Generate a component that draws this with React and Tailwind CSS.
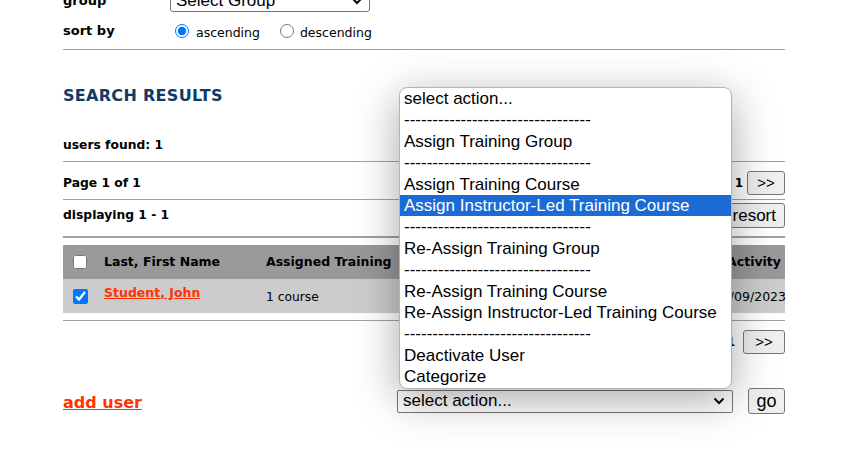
import React from "react";

const dash = "---------------------------------";

const options = [
  "select action...",
  dash,
  "Assign Training Group",
  dash,
  "Assign Training Course",
  "Assign Instructor-Led Training Course",
  dash,
  "Re-Assign Training Group",
  dash,
  "Re-Assign Training Course",
  "Re-Assign Instructor-Led Training Course",
  dash,
  "Deactivate User",
  "Categorize",
];

function Chevron() {
  return (
    <svg width="12" height="8" viewBox="0 0 12 8" className="shrink-0">
      <path d="M1.5 1.5 L6 6 L10.5 1.5" fill="none" stroke="#000" strokeWidth="2" />
    </svg>
  );
}

function Btn({ children, className = "" }) {
  return (
    <div
      className={`flex items-center justify-center border border-[#767676] bg-[#efefef] rounded-[3px] font-['Liberation_Sans',sans-serif] text-black ${className}`}
    >
      {children}
    </div>
  );
}

function Rule() {
  return <div className="h-px bg-[#a0a0a0]" />;
}

export default function App() {
  return (
    <div className="w-[843px] h-[452px] overflow-hidden bg-white font-['DejaVu_Sans',Verdana,sans-serif] text-black">
      <div className="ml-[63px] w-[722px] -mt-[11px]">
        {/* group */}
        <div className="flex items-center h-[23px]">
          <div className="w-[107px] text-[13px] font-bold">group</div>
          <div className="w-[200px] h-[23px] border border-[#767676] rounded-[3px] flex items-center justify-between pl-[5px] pr-[6px] font-['Liberation_Sans',sans-serif] text-[17px]">
            <span>Select Group</span>
            <Chevron />
          </div>
        </div>

        {/* sort by */}
        <div className="flex items-center h-[22px] mt-[8px]">
          <div className="w-[107px] text-[13px] font-bold -mt-[1px]">sort by</div>
          <label className="flex items-center ml-[5px]">
            <input type="radio" name="sort" defaultChecked className="w-[14px] h-[14px] m-0 accent-[#0075ff]" />
            <span className="ml-[7px] text-[12.5px] mt-[4px]">ascending</span>
          </label>
          <label className="flex items-center ml-[20px]">
            <input type="radio" name="sort" className="w-[14px] h-[14px] m-0" />
            <span className="ml-[6px] text-[12.5px] mt-[4px]">descending</span>
          </label>
        </div>

        <div className="mt-[7px]">
          <Rule />
        </div>

        <div className="mt-[36px] h-[20px] flex items-center text-[16px] font-bold text-[#123a68] tracking-[0.3px]">
          SEARCH RESULTS
        </div>

        <div className="mt-[31px] h-[16px] flex items-center text-[12.3px] font-bold">users found: 1</div>

        <div className="mt-[8px]">
          <Rule />
        </div>

        <div className="mt-[9px] h-[24px] flex items-center justify-between">
          <span className="text-[12.3px] font-bold">Page 1 of 1</span>
          <div className="flex items-center">
            <span className="text-[12px] font-bold mr-[4px]">1</span>
            <Btn className="w-[38px] h-[24px] text-[15px]">&gt;&gt;</Btn>
          </div>
        </div>

        <div className="mt-[4px]">
          <Rule />
        </div>

        <div className="mt-[3px] h-[25px] flex items-center justify-between">
          <span className="text-[12.3px] font-bold">displaying 1 - 1</span>
          <Btn className="h-[25px] px-[8px] text-[17px]">resort</Btn>
        </div>

        <div className="mt-[8px] h-[2px] bg-[#a0a0a0]" />

        {/* table */}
        <div className="mt-[7px]">
          <div className="h-[34px] bg-[#999999] flex items-center text-[12.5px] font-bold">
            <div className="w-[41px] pl-[10px] flex items-center">
              <input type="checkbox" className="w-[14px] h-[14px] m-0" />
            </div>
            <div className="w-[162px] mt-[1px]">Last, First Name</div>
            <div className="flex-1 mt-[1px]">Assigned Training</div>
            <div className="pr-[4px] mt-[1px]">Last Activity</div>
          </div>
          <div className="h-[34px] bg-[#cccccc] flex items-center text-[12.3px]">
            <div className="w-[41px] pl-[10px] flex items-center">
              <input type="checkbox" defaultChecked className="w-[15px] h-[15px] m-0 accent-[#0075ff]" />
            </div>
            <div className="w-[162px] mb-[6px]">
              <a href="#" className="font-bold text-[12.5px] text-[#ff3300] underline">Student, John</a>
            </div>
            <div className="flex-1 mt-[3px]">1 course</div>
            <div className="mt-[3px] text-[12.5px] -mr-[1px]">10/09/2023</div>
          </div>
        </div>

        <div className="mt-[7px]">
          <Rule />
        </div>

        <div className="mt-[9px] h-[24px] flex items-center justify-end">
          <span className="text-[12px] font-bold mr-[8px]">1</span>
          <Btn className="w-[42px] h-[24px] text-[15px]">&gt;&gt;</Btn>
        </div>

        {/* actions */}
        <div className="mt-[34px] h-[26px] flex items-center justify-between">
          <a href="#" className="text-[16px] font-bold text-[#ff3300] underline mt-[3px]">add user</a>
          <div className="flex items-center">
            <div className="relative">
              <div className="w-[336px] h-[23px] border border-[#767676] rounded-[2px] bg-white flex items-center justify-between pl-[5px] pr-[7px] font-['Liberation_Sans',sans-serif] text-[17px]">
                <span>select action...</span>
                <Chevron />
              </div>
              {/* open listbox */}
              <div className="absolute left-[2px] bottom-[24px] w-[333px] bg-white border border-[#b4b4b4] rounded-[8px] shadow-[0_10px_44px_rgba(0,0,0,0.35)] overflow-hidden font-['Liberation_Sans',sans-serif] text-[17px] text-black">
                {options.map((o, i) => (
                  <div
                    key={i}
                    className={`h-[21.4px] leading-[21.4px] pl-[4px] whitespace-nowrap ${
                      i === 5 ? "bg-[#1a6bd6] text-white" : ""
                    }`}
                  >
                    {o}
                  </div>
                ))}
              </div>
            </div>
            <Btn className="ml-[15px] w-[37px] h-[26px] text-[18px]">go</Btn>
          </div>
        </div>
      </div>
    </div>
  );
}
